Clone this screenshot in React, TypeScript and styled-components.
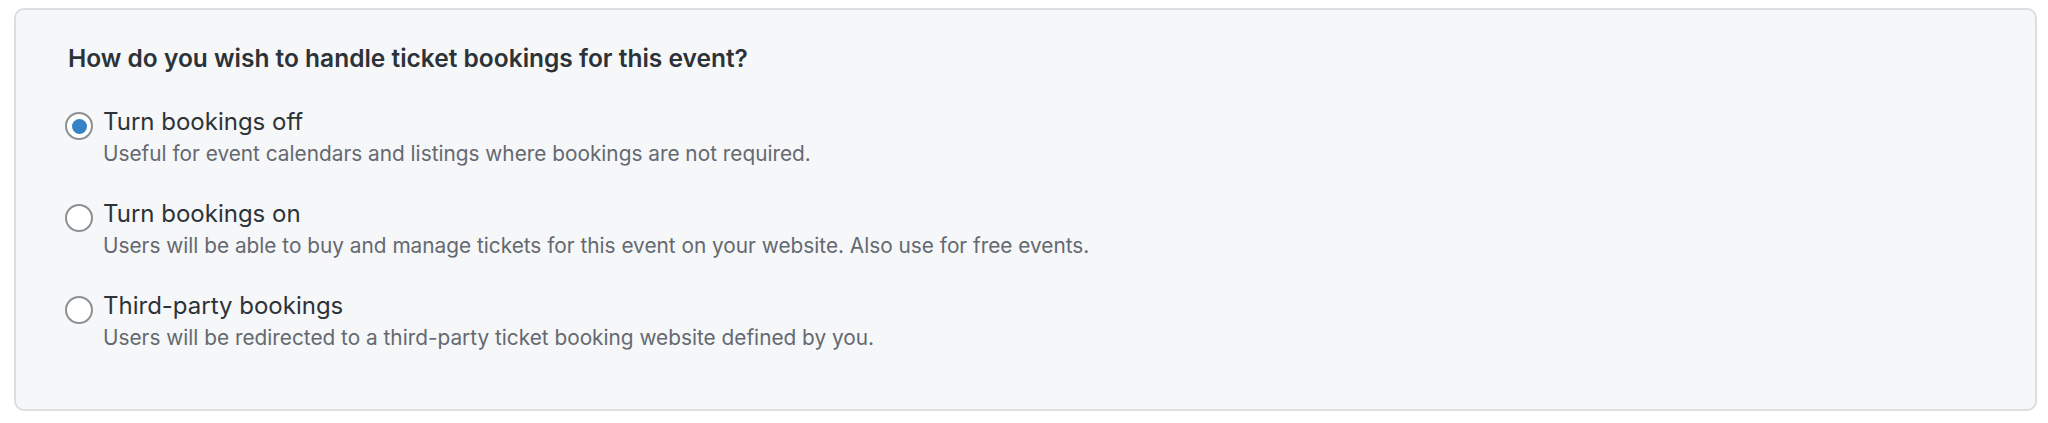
import styled, { createGlobalStyle } from 'styled-components';
import { useState } from 'react';

const GlobalStyle = createGlobalStyle`
  html, body {
    margin: 0;
    padding: 0;
    background: #ffffff;
  }
  body {
    font-family: Inter, "Liberation Sans", Arial, sans-serif;
    -webkit-font-smoothing: antialiased;
  }
`;

const options = [
  {
    value: 'off',
    label: 'Turn bookings off',
    description: 'Useful for event calendars and listings where bookings are not required.',
  },
  {
    value: 'on',
    label: 'Turn bookings on',
    description:
      'Users will be able to buy and manage tickets for this event on your website. Also use for free events.',
  },
  {
    value: 'third-party',
    label: 'Third-party bookings',
    description: 'Users will be redirected to a third-party ticket booking website defined by you.',
  },
];

export default function App() {
  const [selected, setSelected] = useState('off');

  return (
    <Page>
      <GlobalStyle />
      <Panel>
        <Heading>How do you wish to handle ticket bookings for this event?</Heading>
        <OptionList>
          {options.map((option) => (
            <Option key={option.value}>
              <RadioInput
                type="radio"
                name="bookings"
                value={option.value}
                checked={selected === option.value}
                onChange={() => setSelected(option.value)}
              />
              <OptionText>
                <OptionLabel>{option.label}</OptionLabel>
                <OptionDescription>{option.description}</OptionDescription>
              </OptionText>
            </Option>
          ))}
        </OptionList>
      </Panel>
    </Page>
  );
}

const Page = styled.div`
  padding: 8px 11px 12px 14px;
`;

const Panel = styled.div`
  box-sizing: border-box;
  height: 403px;
  padding: 32px 52px 0;
  background-color: #f6f7f9;
  border: 2px solid #dcdee2;
  border-radius: 10px;
`;

const Heading = styled.h2`
  margin: 0 0 32px;
  font-size: 24.5px;
  line-height: 32px;
  font-weight: 600;
  color: #2c3338;
`;

const OptionList = styled.div`
  display: flex;
  flex-direction: column;
  gap: 28px;
`;

const Option = styled.label`
  display: flex;
  align-items: flex-start;
  gap: 10px;
  cursor: pointer;
`;

const RadioInput = styled.input`
  appearance: none;
  box-sizing: border-box;
  flex-shrink: 0;
  width: 28px;
  height: 28px;
  margin: 6px 0 0 -3px;
  border: 2px solid #8c8f94;
  border-radius: 50%;
  background: #ffffff;
  display: grid;
  place-items: center;
  cursor: pointer;

  &::before {
    content: '';
    width: 15px;
    height: 15px;
    border-radius: 50%;
    background: #3582c4;
    transform: scale(0);
  }

  &:checked::before {
    transform: scale(1);
  }
`;

const OptionText = styled.div`
  display: flex;
  flex-direction: column;
`;

const OptionLabel = styled.span`
  font-size: 24px;
  line-height: 32px;
  color: #2c3338;
`;

const OptionDescription = styled.span`
  font-size: 20.8px;
  line-height: 32px;
  color: #646970;
`;
